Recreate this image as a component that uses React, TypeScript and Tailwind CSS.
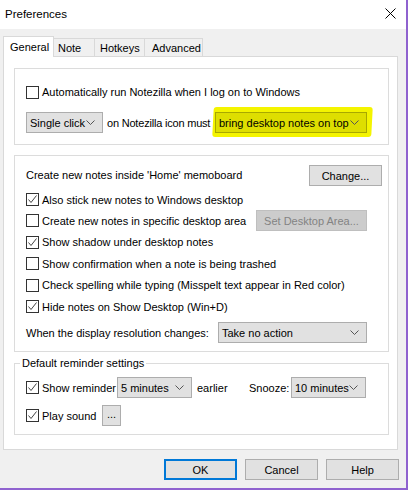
import React from 'react'

// Small native-looking widgets for the preferences dialog

function CheckBox({ checked }: { checked?: boolean }) {
  return (
    <span className="w-[13px] h-[13px] border border-[#333333] bg-white flex items-center justify-center shrink-0">
      {checked && (
        <svg width="11" height="11" viewBox="0 0 11 11">
          <path d="M1.5 5.5 L4 8.5 L9.5 1.5" fill="none" stroke="#444444" strokeWidth="1" />
        </svg>
      )}
    </span>
  )
}

function Check({ label, checked, className = '' }: { label: string; checked?: boolean; className?: string }) {
  return (
    <div className={`flex items-center gap-[3px] ${className}`}>
      <CheckBox checked={checked} />
      <span className="whitespace-nowrap">{label}</span>
    </div>
  )
}

function Chevron() {
  return (
    <svg width="9" height="5" viewBox="0 0 9 5" className="shrink-0">
      <path d="M0.5 0.5 L4.5 4.5 L8.5 0.5" fill="none" stroke="#555555" strokeWidth="1" />
    </svg>
  )
}

function Select({ value, className = '' }: { value: string; className?: string }) {
  return (
    <div
      className={`h-[21px] bg-[#e1e1e1] border border-[#adadad] flex items-center justify-between pl-[3px] pr-[7px] shrink-0 ${className}`}
    >
      <span className="whitespace-nowrap">{value}</span>
      <Chevron />
    </div>
  )
}

function Button({ label, className = '' }: { label: string; className?: string }) {
  return (
    <div
      className={`h-[21px] bg-[#e1e1e1] border border-[#adadad] flex items-center justify-center shrink-0 ${className}`}
    >
      {label}
    </div>
  )
}

const tabs = [
  { name: 'Note', w: 'w-[41px]', pl: 'pl-[4px]' },
  { name: 'Hotkeys', w: 'w-[50px]', pl: 'pl-[5px]' },
  { name: 'Advanced', w: 'w-[58px]', pl: 'pl-[7px]' },
]

export default function App() {
  return (
    <div className="w-[408px] h-[490px] bg-[#f0f0f0] border-r-2 border-b-2 border-[#8f62cf] flex flex-col font-['Liberation_Sans',Arial,sans-serif] text-[11px] text-black leading-[16px]">
      {/* title bar */}
      <div className="h-[29px] bg-white flex items-center justify-between pl-[5px] pr-[10px] shrink-0">
        <span className="-mt-[2px] text-[11.5px]">Preferences</span>
        <svg width="11" height="11" viewBox="0 0 11 11" className="-mt-[3px]">
          <path d="M0.5 0.5 L10.5 10.5 M10.5 0.5 L0.5 10.5" stroke="#000" strokeWidth="1" />
        </svg>
      </div>

      {/* tab strip */}
      <div className="flex items-end h-[20px] mt-[7px] pl-[3px] shrink-0">
        <div className="relative z-10 h-[21px] -mb-px w-[51px] bg-white border border-b-0 border-[#d9d9d9] pl-[6px] pt-[2px]">
          General
        </div>
        {tabs.map((t) => (
          <div
            key={t.name}
            className={`h-[18px] ${t.w} ${t.pl} border-t border-r border-[#d9d9d9] bg-[#f0f0f0] pt-[1px]`}
          >
            {t.name}
          </div>
        ))}
      </div>

      {/* tab page */}
      <div className="ml-[3px] w-[395px] h-[394px] bg-white border border-[#d9d9d9] pl-[10px] pr-[8px] pt-[11px] shrink-0">
        {/* startup */}
        <div className="h-[77px] border border-[#dcdcdc] pl-[11px] pt-[15px]">
          <Check label="Automatically run Notezilla when I log on to Windows" />
          <div className="flex items-center mt-[12px]">
            <Select value="Single click" className="w-[77px]" />
            <span className="ml-[4px] whitespace-nowrap tracking-[-0.2px]">on Notezilla icon must</span>
            <div className="relative ml-auto mr-[21px]">
              {/* marker highlight around the action dropdown */}
              <div className="absolute -left-[2px] -right-[5px] -top-[5px] -bottom-[4px] bg-[#f4f400] rounded-[3px] skew-x-[-3deg]" />
              <div className="relative h-[21px] w-[152px] bg-[#dede00] border border-[#a8a800] flex items-center justify-between pl-[3px] pr-[7px]">
                <span className="whitespace-nowrap">bring desktop notes on top</span>
                <Chevron />
              </div>
            </div>
          </div>
        </div>

        {/* new notes */}
        <div className="mt-[10px] h-[197px] border border-[#dcdcdc] pl-[11px] pr-[6px] pt-[9px]">
          <div className="flex items-center justify-between h-[21px]">
            <span className="-mt-[2px]">Create new notes inside 'Home' memoboard</span>
            <Button label="Change..." className="w-[73px]" />
          </div>
          <div className="mt-[3px] flex flex-col">
            <Check label="Also stick new notes to Windows desktop" checked className="h-[21px]" />
            <div className="flex items-center h-[21px]">
              <Check label="Create new notes in specific desktop area" className="w-[230px]" />
              <Button label="Set Desktop Area..." className="w-[111px] !bg-[#cccccc] !border-[#bfbfbf] text-[#838383]" />
            </div>
            <Check label="Show shadow under desktop notes" checked className="h-[22px]" />
            <Check label="Show confirmation when a note is being trashed" className="h-[21px]" />
            <Check label="Check spelling while typing (Misspelt text appear in Red color)" className="h-[22px]" />
            <Check label="Hide notes on Show Desktop (Win+D)" checked className="h-[21px]" />
          </div>
          <div className="flex items-center mt-[5px]">
            <span className="w-[192px] whitespace-nowrap">When the display resolution changes:</span>
            <Select value="Take no action" className="w-[149px]" />
          </div>
        </div>

        {/* reminders */}
        <fieldset className="mt-[3px] h-[80px] border border-[#dcdcdc]">
          <legend className="ml-[5px] px-[2px] leading-[16px]">Default reminder settings</legend>
          <div className="pl-[11px]">
            <div className="flex items-center mt-[6px]">
              <Check label="Show reminder" checked className="w-[91px]" />
              <Select value="5 minutes" className="w-[75px]" />
              <span className="ml-[5px] w-[52px]">earlier</span>
              <span className="w-[42px]">Snooze:</span>
              <Select value="10 minutes" className="w-[75px]" />
            </div>
            <div className="flex items-center mt-[7px]">
              <Check label="Play sound" checked className="w-[76px]" />
              <Button label="..." className="w-[19px] pb-[3px]" />
            </div>
          </div>
        </fieldset>
      </div>

      {/* dialog buttons */}
      <div className="flex justify-end gap-[8px] pr-[7px] mt-[9px]">
        <Button label="OK" className="w-[73px] !border-2 !border-[#0078d7]" />
        <Button label="Cancel" className="w-[73px]" />
        <Button label="Help" className="w-[73px]" />
      </div>
    </div>
  )
}
